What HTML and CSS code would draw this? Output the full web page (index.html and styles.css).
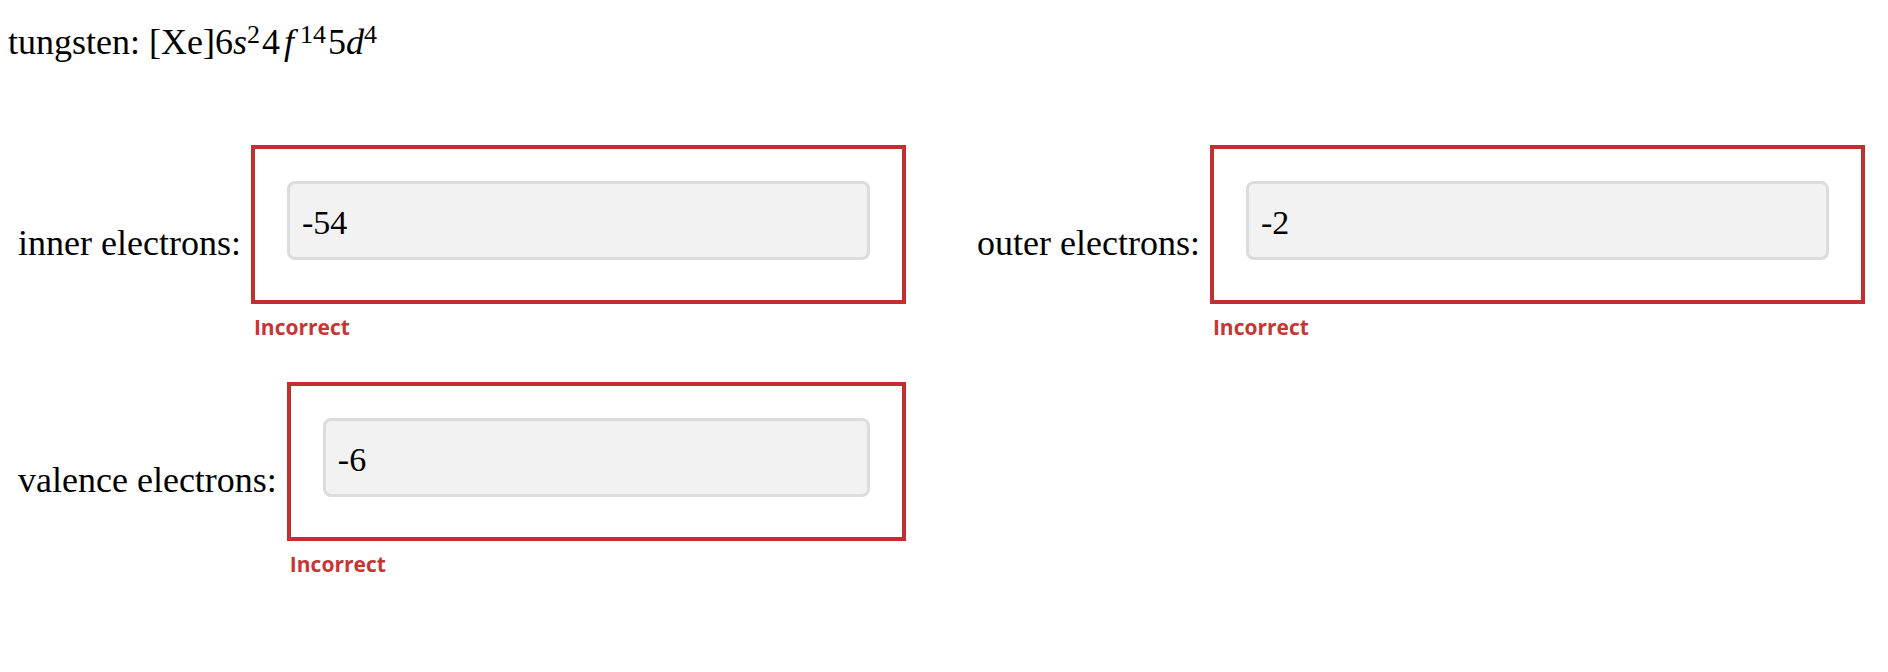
FILE: index.html
```html
<!DOCTYPE html>
<html>
<head>
<meta charset="utf-8">
<link rel="stylesheet" href="styles.css">
</head>
<body>
<p class="title">tungsten: [Xe]6<i>s</i><sup>2</sup>4<i class="f">f</i><sup>14</sup>5<i>d</i><sup>4</sup></p>
<div class="grid">
  <div class="item">
    <label class="label">inner electrons:</label>
    <div class="field">
      <div class="box"><input class="input" type="text" value="-54"></div>
      <div class="msg">Incorrect</div>
    </div>
  </div>
  <div class="item">
    <label class="label">outer electrons:</label>
    <div class="field">
      <div class="box"><input class="input" type="text" value="-2"></div>
      <div class="msg">Incorrect</div>
    </div>
  </div>
  <div class="item">
    <label class="label">valence electrons:</label>
    <div class="field">
      <div class="box"><input class="input" type="text" value="-6"></div>
      <div class="msg">Incorrect</div>
    </div>
  </div>
</div>
</body>
</html>
```
FILE: styles.css
```css
body {
  margin: 8px;
  font-family: "Liberation Serif", "Times New Roman", serif;
  color: #000;
  background: #fff;
}
.title {
  margin: 13px 0 0;
  font-size: 36px;
  line-height: normal;
}
.title i { font-style: italic; }
.title .f { margin-left: 4px; margin-right: 6px; }
.title sup {
  font-size: 26px;
  line-height: 0;
  vertical-align: 0.42em;
  margin-right: 2px;
}
.grid {
  display: grid;
  grid-template-columns: 898px 898px;
  column-gap: 61px;
  row-gap: 41px;
  margin-top: 82px;
}
.item {
  display: flex;
  align-items: center;
  padding-left: 10px;
}
.label {
  font-size: 36px;
  margin-right: 10px;
  white-space: nowrap;
}
.field {
  flex: 1;
  display: flex;
  flex-direction: column;
}
.box {
  border: 4px solid #c22f2f;
  padding: 32px 32px 40px;
  display: flex;
}
.input {
  flex: 1;
  min-width: 0;
  height: 79px;
  box-sizing: border-box;
  border: 3px solid #dcdcdc;
  border-radius: 8px;
  background: #f2f2f2;
  padding: 4px 12px 0;
  font: 34px "Liberation Serif", "Times New Roman", serif;
  color: #000;
  outline: none;
}
.msg {
  margin-top: 10px;
  margin-left: 3px;
  font-family: "Open Sans", "Noto Sans", sans-serif;
  font-weight: 700;
  font-size: 21px;
  color: #c73535;
  line-height: 27px;
}
```
